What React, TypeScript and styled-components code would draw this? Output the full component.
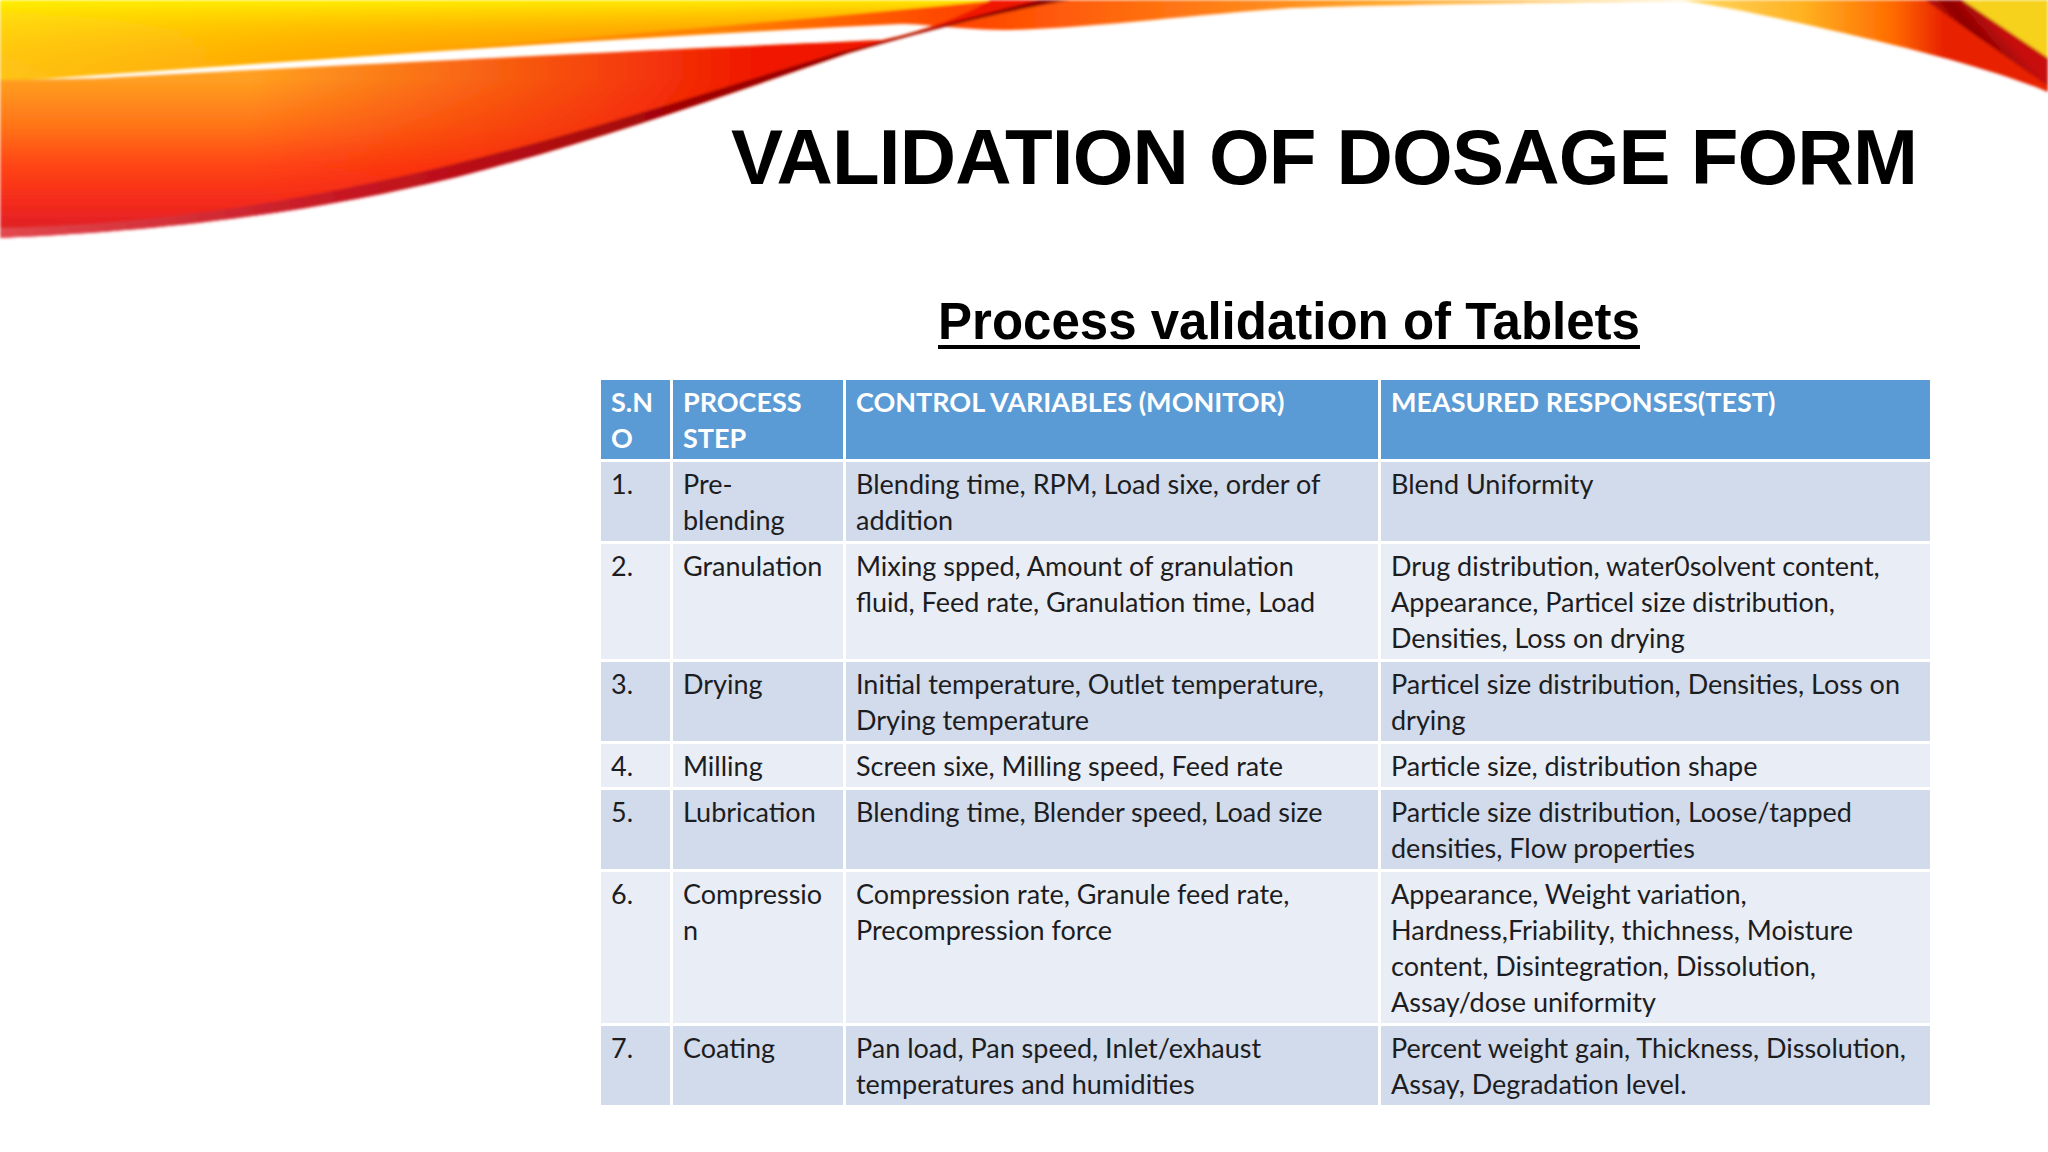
import React from "react"
import styled, { createGlobalStyle } from "styled-components"

const GlobalStyle = createGlobalStyle`
  html, body {
    margin: 0;
    padding: 0;
    background: #ffffff;
  }
  body {
    font-family: "Liberation Sans", Arial, sans-serif;
  }
`

const Slide = styled.div`
  position: relative;
  width: 2048px;
  height: 1152px;
  overflow: hidden;
  background: #ffffff;
`

const SwooshArt = styled.svg`
  position: absolute;
  top: 0;
  left: 0;
  pointer-events: none;
`

const Content = styled.main`
  position: relative;
  display: flex;
  flex-direction: column;
  padding: 118px 118px 0 598px;
`

const Title = styled.h1`
  margin: 0 0 0 133px;
  font-family: "Liberation Sans", Arial, sans-serif;
  font-weight: 700;
  font-size: 78px;
  line-height: 78px;
  letter-spacing: -0.8px;
  color: #000000;
  white-space: nowrap;
`

const Subtitle = styled.h2`
  margin: 100px 0 30px 50px;
  text-align: center;
  font-family: "Liberation Sans", Arial, sans-serif;
  font-weight: 700;
  font-size: 51px;
  line-height: 51px;
  color: #000000;
  text-decoration: underline;
  text-decoration-thickness: 4px;
  text-underline-offset: 6px;
`

const Table = styled.table`
  width: 1332px;
  table-layout: fixed;
  border-collapse: collapse;
  font-family: Lato, "Open Sans", sans-serif;
  font-size: 27px;
  line-height: 36px;
`

const HeadCell = styled.th<{ $w: number }>`
  box-sizing: border-box;
  width: ${({ $w }) => $w}px;
  background: #5b9bd5;
  color: #ffffff;
  font-weight: 700;
  text-align: left;
  vertical-align: top;
  padding: 4px 8px 3px 10px;
  border: 3px solid #ffffff;
`

const Row = styled.tr<{ $band: boolean }>`
  background: ${({ $band }) => ($band ? "#d1dbeb" : "#e9edf6")};
`

const Cell = styled.td`
  box-sizing: border-box;
  color: #1d1d1f;
  vertical-align: top;
  padding: 4px 8px 3px 10px;
  border: 3px solid #ffffff;
`

const Line = styled.span`
  display: block;
  white-space: nowrap;
`

type Step = {
  no: string
  step: string[]
  control: string[]
  measured: string[]
}

const steps: Step[] = [
  {
    no: "1.",
    step: ["Pre-", "blending"],
    control: ["Blending time, RPM, Load sixe, order of", "addition"],
    measured: ["Blend Uniformity"],
  },
  {
    no: "2.",
    step: ["Granulation"],
    control: [
      "Mixing spped, Amount of granulation",
      "fluid, Feed rate, Granulation time, Load",
    ],
    measured: [
      "Drug distribution, water0solvent content,",
      "Appearance, Particel size distribution,",
      "Densities, Loss on drying",
    ],
  },
  {
    no: "3.",
    step: ["Drying"],
    control: ["Initial temperature, Outlet temperature,", "Drying temperature"],
    measured: ["Particel size distribution, Densities, Loss on", "drying"],
  },
  {
    no: "4.",
    step: ["Milling"],
    control: ["Screen sixe, Milling speed, Feed rate"],
    measured: ["Particle size, distribution shape"],
  },
  {
    no: "5.",
    step: ["Lubrication"],
    control: ["Blending time, Blender speed, Load size"],
    measured: [
      "Particle size distribution, Loose/tapped",
      "densities, Flow properties",
    ],
  },
  {
    no: "6.",
    step: ["Compressio", "n"],
    control: ["Compression rate, Granule feed rate,", "Precompression force"],
    measured: [
      "Appearance, Weight variation,",
      "Hardness,Friability, thichness, Moisture",
      "content, Disintegration, Dissolution,",
      "Assay/dose uniformity",
    ],
  },
  {
    no: "7.",
    step: ["Coating"],
    control: ["Pan load, Pan speed, Inlet/exhaust", "temperatures and humidities"],
    measured: [
      "Percent weight gain, Thickness, Dissolution,",
      "Assay, Degradation level.",
    ],
  },
]

const Lines = ({ lines }: { lines: string[] }) => (
  <>
    {lines.map((text, i) => (
      <Line key={i}>{text}</Line>
    ))}
  </>
)

const lowerBand =
  "M0,80 C60,79 90,79 120,77 C400,62 700,48 882,40 C930,30 965,14 990,0 L1070,0 C1000,12 920,32 849,53 C720,97 600,140 457,177 C330,208 190,230 0,238 Z"

// decorative ribbon across the top edge of the slide
const Swoosh = () => (
  <SwooshArt width="2048" height="260" viewBox="0 0 2048 260">
    <defs>
      <linearGradient id="upper" gradientUnits="userSpaceOnUse" x1="0" y1="0" x2="1600" y2="0">
        <stop offset="0" stopColor="#ffd21a" />
        <stop offset="0.2" stopColor="#ffa800" />
        <stop offset="0.45" stopColor="#ff8000" />
        <stop offset="0.6" stopColor="#ff4400" />
        <stop offset="0.72" stopColor="#ff7010" />
        <stop offset="0.86" stopColor="#ffa428" />
        <stop offset="1" stopColor="#ffd070" />
      </linearGradient>
      <linearGradient id="upperShade" gradientUnits="userSpaceOnUse" x1="0" y1="0" x2="0" y2="80">
        <stop offset="0" stopColor="#fff000" stopOpacity="0.95" />
        <stop offset="0.4" stopColor="#ffd000" stopOpacity="0.45" />
        <stop offset="1" stopColor="#ff8a00" stopOpacity="0.2" />
      </linearGradient>
      <linearGradient id="lower" gradientUnits="userSpaceOnUse" x1="0" y1="78" x2="0" y2="238">
        <stop offset="0" stopColor="#ffa020" />
        <stop offset="0.3" stopColor="#ff7418" />
        <stop offset="0.55" stopColor="#ff4414" />
        <stop offset="0.78" stopColor="#f42a1c" />
        <stop offset="1" stopColor="#d81c28" />
      </linearGradient>
      <linearGradient id="lowerRed" gradientUnits="userSpaceOnUse" x1="250" y1="0" x2="760" y2="0">
        <stop offset="0" stopColor="#f01400" stopOpacity="0" />
        <stop offset="1" stopColor="#f01000" stopOpacity="0.95" />
      </linearGradient>
      <linearGradient id="lip" gradientUnits="userSpaceOnUse" x1="0" y1="0" x2="1060" y2="0">
        <stop offset="0" stopColor="#e2484e" />
        <stop offset="0.35" stopColor="#c41420" />
        <stop offset="0.65" stopColor="#a00404" />
        <stop offset="1" stopColor="#8a0000" />
      </linearGradient>
      <linearGradient id="right" gradientUnits="userSpaceOnUse" x1="1690" y1="0" x2="1945" y2="0">
        <stop offset="0" stopColor="#ffd860" />
        <stop offset="0.45" stopColor="#ffb020" />
        <stop offset="0.8" stopColor="#ff6a00" />
        <stop offset="1" stopColor="#e82000" />
      </linearGradient>
      <linearGradient id="stripe" gradientUnits="userSpaceOnUse" x1="1950" y1="40" x2="1985" y2="10">
        <stop offset="0" stopColor="#d81810" />
        <stop offset="0.5" stopColor="#8e0000" />
        <stop offset="1" stopColor="#c81010" />
      </linearGradient>
      <filter id="soft" x="-5%" y="-20%" width="110%" height="140%">
        <feGaussianBlur stdDeviation="1.4" />
      </filter>
    </defs>
    <g filter="url(#soft)">
      <path
        d="M0,0 H1700 C1560,3 1400,4 1290,8 C1180,16 1090,28 1010,30 C960,30 930,24 900,24 C650,36 380,55 98,75 L0,82 Z"
        fill="url(#upper)"
      />
      <path d="M0,0 H1000 C700,30 380,55 98,75 L0,82 Z" fill="url(#upperShade)" />
      <path d={lowerBand} fill="url(#lower)" />
      <path d={lowerBand} fill="url(#lowerRed)" />
      <path
        d="M0,238 C190,230 330,208 457,177 C600,140 720,97 849,53 C920,32 1000,12 1070,0 L1040,0 C970,16 900,38 840,52 C720,88 600,128 450,165 C320,196 180,224 0,228 Z"
        fill="url(#lip)"
      />
      <path
        d="M1680,0 H2048 V92 C2000,72 1920,50 1830,30 C1770,16 1720,6 1680,0 Z"
        fill="url(#right)"
      />
      <path d="M1962,0 H2048 V58 Z" fill="#f6d21a" />
      <path d="M1925,0 L1962,0 L2048,58 L2048,86 Z" fill="url(#stripe)" />
    </g>
  </SwooshArt>
)

const App = () => {
  return (
    <Slide>
      <GlobalStyle />
      <Swoosh />
      <Content>
        <Title>VALIDATION OF DOSAGE FORM</Title>
        <Subtitle>Process validation of Tablets</Subtitle>
        <Table>
          <thead>
            <tr>
              <HeadCell $w={72}>
                <Lines lines={["S.N", "O"]} />
              </HeadCell>
              <HeadCell $w={173}>
                <Lines lines={["PROCESS", "STEP"]} />
              </HeadCell>
              <HeadCell $w={535}>CONTROL VARIABLES (MONITOR)</HeadCell>
              <HeadCell $w={552}>MEASURED RESPONSES(TEST)</HeadCell>
            </tr>
          </thead>
          <tbody>
            {steps.map((s, i) => (
              <Row key={s.no} $band={i % 2 === 0}>
                <Cell>{s.no}</Cell>
                <Cell>
                  <Lines lines={s.step} />
                </Cell>
                <Cell>
                  <Lines lines={s.control} />
                </Cell>
                <Cell>
                  <Lines lines={s.measured} />
                </Cell>
              </Row>
            ))}
          </tbody>
        </Table>
      </Content>
    </Slide>
  )
}

export default App
